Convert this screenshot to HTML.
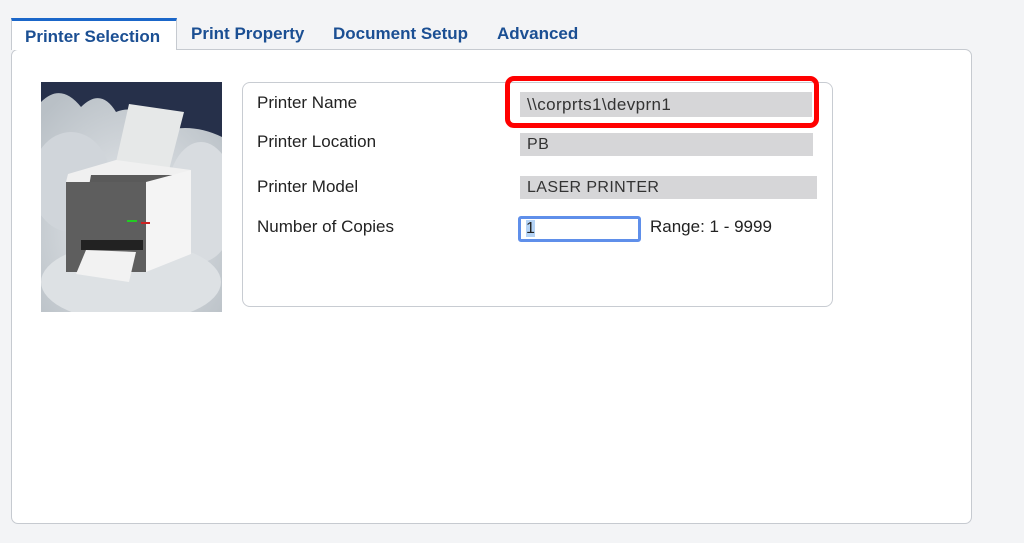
<!DOCTYPE html>
<html><head><style>
body{margin:0;width:1024px;height:543px;background:#f3f4f6;font-family:"Liberation Sans",Arial,sans-serif;position:relative;overflow:hidden}
.a{position:absolute}
.tab{position:absolute;top:24px;font-weight:bold;font-size:17px;color:#1b4f93}
.lbl{position:absolute;left:257px;font-size:17px;color:#222}
.fld{position:absolute;left:520px;background:#d6d6d8;font-size:16px;color:#333;box-sizing:border-box;padding-left:7px;letter-spacing:0.4px}
</style></head><body>
<div class="a" style="left:11px;top:49px;width:959px;height:473px;background:#fff;border:1px solid #c6cad0;border-radius:7px"></div>
<div class="a" style="left:11px;top:18px;width:166px;height:32px;background:#fff;border:1px solid #c6cad0;border-top:3px solid #1a66c9;border-bottom:none;box-sizing:border-box"></div>
<div class="tab" style="left:25px;top:27px">Printer Selection</div>
<div class="tab" style="left:191px">Print Property</div>
<div class="tab" style="left:333px">Document Setup</div>
<div class="tab" style="left:497px">Advanced</div>
<svg class="a" style="left:41px;top:82px" width="181" height="230" viewBox="0 0 181 230">
<defs><radialGradient id="c" cx="50%" cy="60%" r="70%"><stop offset="0" stop-color="#e8ebee"/><stop offset="1" stop-color="#b9c0c6"/></radialGradient></defs>
<rect width="181" height="230" fill="#26304a"/>
<path d="M0 20 Q20 0 40 25 Q60 5 75 30 Q100 20 120 50 Q150 40 181 55 L181 230 L0 230Z" fill="url(#c)"/>
<ellipse cx="30" cy="100" rx="40" ry="50" fill="#d0d5da"/><ellipse cx="160" cy="120" rx="35" ry="60" fill="#d8dce0"/><ellipse cx="90" cy="200" rx="90" ry="40" fill="#dde1e4"/>
<polygon points="88,22 143,30 128,88 75,80" fill="#e6e8e8"/>
<polygon points="27,92 75,78 150,88 150,100 25,100" fill="#f0f0f0"/>
<polygon points="50,93 132,93 132,104 48,104" fill="#5a5a5a"/>
<rect x="25" y="100" width="80" height="90" fill="#5e5e5e"/>
<polygon points="105,100 150,88 150,172 105,190" fill="#f4f4f4"/>
<rect x="86" y="138" width="10" height="2" fill="#2c2"/><rect x="100" y="140" width="9" height="2" fill="#c22"/>
<rect x="40" y="158" width="62" height="10" fill="#222"/>
<polygon points="45,168 95,170 88,200 35,192" fill="#f2f2f2"/>
</svg>
<div class="a" style="left:242px;top:82px;width:589px;height:223px;border:1px solid #c8ccd2;border-radius:8px"></div>
<div class="lbl" style="top:93px">Printer Name</div>
<div class="lbl" style="top:132px">Printer Location</div>
<div class="lbl" style="top:177px">Printer Model</div>
<div class="lbl" style="top:217px">Number of Copies</div>
<div class="fld" style="top:92px;width:292px;height:25px;line-height:25px;font-size:17px">\\corprts1\devprn1</div>
<div class="fld" style="top:133px;width:293px;height:23px;line-height:23px">PB</div>
<div class="fld" style="top:176px;width:297px;height:23px;line-height:23px">LASER PRINTER</div>
<div class="a" style="left:505px;top:76px;width:314px;height:52px;border:5px solid #f00;border-radius:9px;box-sizing:border-box"></div>
<div class="a" style="left:518px;top:216px;width:123px;height:26px;border:3px solid #5f8fea;border-radius:3px;box-sizing:border-box;font-size:16px;line-height:20px;padding-left:5px;color:#222"><span style="background:#b5d3f5">1</span></div>
<div class="a" style="left:650px;top:217px;font-size:17px;color:#222">Range: 1 - 9999</div>
</body></html>
